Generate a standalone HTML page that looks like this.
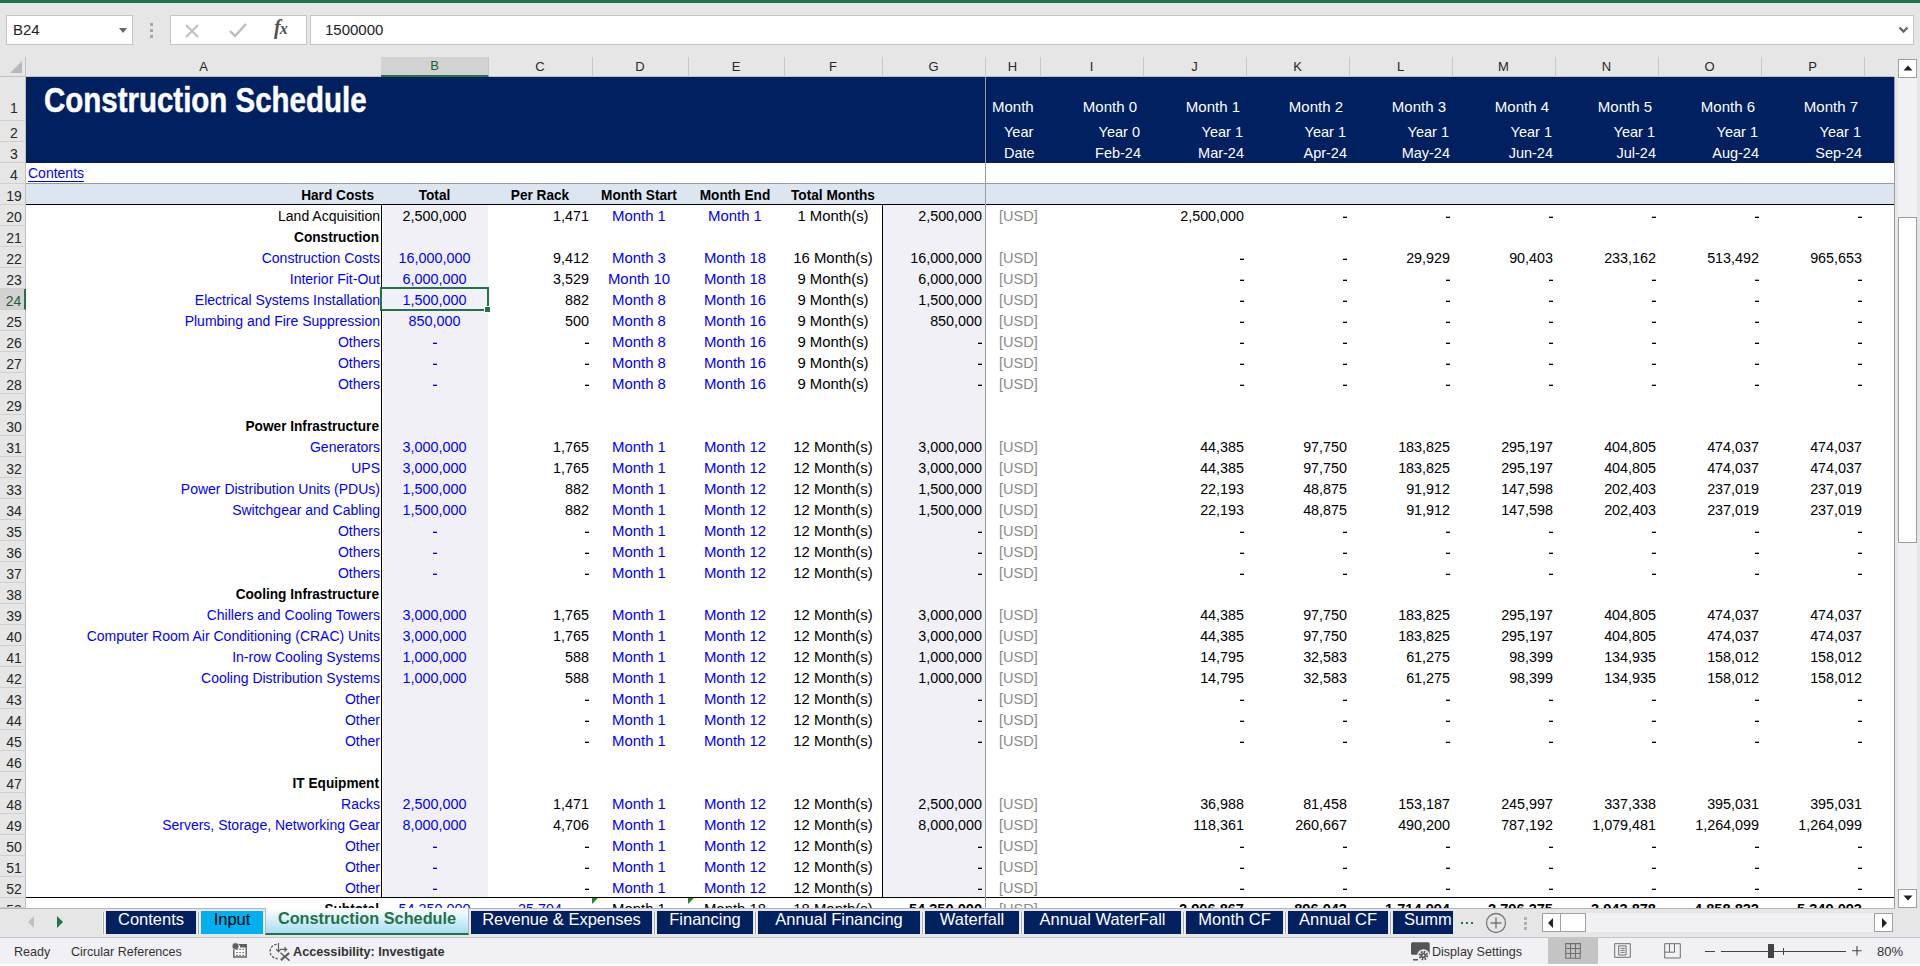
<!DOCTYPE html><html><head><meta charset="utf-8"><style>
*{margin:0;padding:0;box-sizing:border-box}
html,body{width:1920px;height:966px;overflow:hidden;background:#e6e6e6;font-family:"Liberation Sans",sans-serif;}
.a{position:absolute}
.t{position:absolute;height:21px;line-height:21px;font-size:14px;white-space:nowrap}
.ch{position:absolute;top:57px;height:20px;line-height:20px;font-size:13px;text-align:center;color:#262626;border-right:1px solid #c8c8c8}
.rh{position:absolute;left:0;width:26px;font-size:14px;color:#262626;text-align:center;border-bottom:1px solid #cfcfcf}
.tab{position:absolute;top:911px;height:23px;line-height:17px;font-size:16.5px;color:#fff;background:#002060;text-align:center;white-space:nowrap}
.sep{position:absolute;top:912px;width:3px;height:22px;background:linear-gradient(90deg,#f4f4f4 33%,#a8a8a8 33%,#a8a8a8 67%,#f4f4f4 67%)}
</style></head><body>
<div class="a" style="left:0;top:0;width:1920px;height:3px;background:#217346"></div>
<div class="a" style="left:6px;top:15px;width:127px;height:30px;background:#fff;border:1px solid #c6c6c6"></div>
<div class="a" style="left:13px;top:15px;height:30px;line-height:30px;font-size:15px;color:#222">B24</div>
<svg class="a" style="left:119px;top:28px" width="10" height="6"><path d="M0 0 L8 0 L4 5Z" fill="#666"/></svg>
<div class="a" style="left:150px;top:23px;width:3px;height:3px;background:#a6a6a6"></div>
<div class="a" style="left:150px;top:29px;width:3px;height:3px;background:#a6a6a6"></div>
<div class="a" style="left:150px;top:35px;width:3px;height:3px;background:#a6a6a6"></div>
<div class="a" style="left:170px;top:15px;width:137px;height:30px;background:#fff;border:1px solid #c6c6c6"></div>
<svg class="a" style="left:184px;top:23px" width="16" height="16"><path d="M2 2 L14 14 M14 2 L2 14" stroke="#bcbcbc" stroke-width="1.8"/></svg>
<svg class="a" style="left:228px;top:22px" width="20" height="16"><path d="M2 9 L7 14 L18 2" stroke="#bcbcbc" stroke-width="2.4" fill="none"/></svg>
<div class="a" style="left:274px;top:16px;font-family:'Liberation Serif',serif;font-style:italic;font-weight:bold;font-size:20px;color:#505050;letter-spacing:-1px">f<span style="font-size:16px">x</span></div>
<div class="a" style="left:310px;top:15px;width:1604px;height:30px;background:#fff;border:1px solid #c6c6c6"></div>
<div class="a" style="left:325px;top:15px;height:30px;line-height:30px;font-size:15px;color:#222">1500000</div>
<svg class="a" style="left:1898px;top:26px" width="12" height="8"><path d="M1.5 1.5 L5.5 5.5 L9.5 1.5" stroke="#6a6a6a" stroke-width="2.4" fill="none"/></svg>
<div class="a" style="left:0;top:57px;width:1894px;height:20px;background:#e6e6e6;border-bottom:1px solid #c0c0c0"></div>
<svg class="a" style="left:9px;top:60px" width="14" height="14"><path d="M13 1 L13 13 L1 13Z" fill="#b8b8b8"/></svg>
<div class="a" style="left:25px;top:57px;width:1px;height:20px;background:#c0c0c0"></div>
<div class="ch" style="left:26px;width:356px;">A</div>
<div class="ch" style="left:381px;width:108px;background:#d2d2d2;border-bottom:2px solid #217346;color:#1b5e32;line-height:18px;">B</div>
<div class="ch" style="left:488px;width:105px;">C</div>
<div class="ch" style="left:592px;width:97px;">D</div>
<div class="ch" style="left:688px;width:97px;">E</div>
<div class="ch" style="left:784px;width:99px;">F</div>
<div class="ch" style="left:882px;width:104px;">G</div>
<div class="ch" style="left:985px;width:56px;">H</div>
<div class="ch" style="left:1040px;width:104px;">I</div>
<div class="ch" style="left:1143px;width:104px;">J</div>
<div class="ch" style="left:1246px;width:104px;">K</div>
<div class="ch" style="left:1349px;width:104px;">L</div>
<div class="ch" style="left:1452px;width:104px;">M</div>
<div class="ch" style="left:1555px;width:104px;">N</div>
<div class="ch" style="left:1658px;width:104px;">O</div>
<div class="ch" style="left:1761px;width:104px;">P</div>
<div class="ch" style="left:1864px;width:30px;border-right:none"></div>
<div class="a" style="left:26px;top:77px;width:1868px;height:831px;background:#fff"></div>
<div class="rh" style="top:77px;height:44px;overflow:hidden;background:#e6e6e6;border-right:1px solid #c0c0c0;"><div style="position:absolute;left:3px;right:0;top:20.5px;height:21px;line-height:21px">1</div></div>
<div class="rh" style="top:121px;height:21px;overflow:hidden;background:#e6e6e6;border-right:1px solid #c0c0c0;"><div style="position:absolute;left:3px;right:0;top:1.5px;height:21px;line-height:21px">2</div></div>
<div class="rh" style="top:142px;height:21px;overflow:hidden;background:#e6e6e6;border-right:1px solid #c0c0c0;"><div style="position:absolute;left:3px;right:0;top:1.5px;height:21px;line-height:21px">3</div></div>
<div class="rh" style="top:163px;height:21px;overflow:hidden;background:#e6e6e6;border-right:1px solid #c0c0c0;"><div style="position:absolute;left:3px;right:0;top:1.5px;height:21px;line-height:21px">4</div></div>
<div class="rh" style="top:184px;height:21px;overflow:hidden;background:#e6e6e6;border-right:1px solid #c0c0c0;"><div style="position:absolute;left:3px;right:0;top:1.5px;height:21px;line-height:21px">19</div></div>
<div class="rh" style="top:205px;height:21px;overflow:hidden;background:#e6e6e6;border-right:1px solid #c0c0c0;"><div style="position:absolute;left:3px;right:0;top:1.5px;height:21px;line-height:21px">20</div></div>
<div class="rh" style="top:226px;height:21px;overflow:hidden;background:#e6e6e6;border-right:1px solid #c0c0c0;"><div style="position:absolute;left:3px;right:0;top:1.5px;height:21px;line-height:21px">21</div></div>
<div class="rh" style="top:247px;height:21px;overflow:hidden;background:#e6e6e6;border-right:1px solid #c0c0c0;"><div style="position:absolute;left:3px;right:0;top:1.5px;height:21px;line-height:21px">22</div></div>
<div class="rh" style="top:268px;height:21px;overflow:hidden;background:#e6e6e6;border-right:1px solid #c0c0c0;"><div style="position:absolute;left:3px;right:0;top:1.5px;height:21px;line-height:21px">23</div></div>
<div class="rh" style="top:289px;height:21px;overflow:hidden;background:#d2d2d2;color:#1b5e32;border-right:2px solid #217346;"><div style="position:absolute;left:3px;right:0;top:1.5px;height:21px;line-height:21px">24</div></div>
<div class="rh" style="top:310px;height:21px;overflow:hidden;background:#e6e6e6;border-right:1px solid #c0c0c0;"><div style="position:absolute;left:3px;right:0;top:1.5px;height:21px;line-height:21px">25</div></div>
<div class="rh" style="top:331px;height:21px;overflow:hidden;background:#e6e6e6;border-right:1px solid #c0c0c0;"><div style="position:absolute;left:3px;right:0;top:1.5px;height:21px;line-height:21px">26</div></div>
<div class="rh" style="top:352px;height:21px;overflow:hidden;background:#e6e6e6;border-right:1px solid #c0c0c0;"><div style="position:absolute;left:3px;right:0;top:1.5px;height:21px;line-height:21px">27</div></div>
<div class="rh" style="top:373px;height:21px;overflow:hidden;background:#e6e6e6;border-right:1px solid #c0c0c0;"><div style="position:absolute;left:3px;right:0;top:1.5px;height:21px;line-height:21px">28</div></div>
<div class="rh" style="top:394px;height:21px;overflow:hidden;background:#e6e6e6;border-right:1px solid #c0c0c0;"><div style="position:absolute;left:3px;right:0;top:1.5px;height:21px;line-height:21px">29</div></div>
<div class="rh" style="top:415px;height:21px;overflow:hidden;background:#e6e6e6;border-right:1px solid #c0c0c0;"><div style="position:absolute;left:3px;right:0;top:1.5px;height:21px;line-height:21px">30</div></div>
<div class="rh" style="top:436px;height:21px;overflow:hidden;background:#e6e6e6;border-right:1px solid #c0c0c0;"><div style="position:absolute;left:3px;right:0;top:1.5px;height:21px;line-height:21px">31</div></div>
<div class="rh" style="top:457px;height:21px;overflow:hidden;background:#e6e6e6;border-right:1px solid #c0c0c0;"><div style="position:absolute;left:3px;right:0;top:1.5px;height:21px;line-height:21px">32</div></div>
<div class="rh" style="top:478px;height:21px;overflow:hidden;background:#e6e6e6;border-right:1px solid #c0c0c0;"><div style="position:absolute;left:3px;right:0;top:1.5px;height:21px;line-height:21px">33</div></div>
<div class="rh" style="top:499px;height:21px;overflow:hidden;background:#e6e6e6;border-right:1px solid #c0c0c0;"><div style="position:absolute;left:3px;right:0;top:1.5px;height:21px;line-height:21px">34</div></div>
<div class="rh" style="top:520px;height:21px;overflow:hidden;background:#e6e6e6;border-right:1px solid #c0c0c0;"><div style="position:absolute;left:3px;right:0;top:1.5px;height:21px;line-height:21px">35</div></div>
<div class="rh" style="top:541px;height:21px;overflow:hidden;background:#e6e6e6;border-right:1px solid #c0c0c0;"><div style="position:absolute;left:3px;right:0;top:1.5px;height:21px;line-height:21px">36</div></div>
<div class="rh" style="top:562px;height:21px;overflow:hidden;background:#e6e6e6;border-right:1px solid #c0c0c0;"><div style="position:absolute;left:3px;right:0;top:1.5px;height:21px;line-height:21px">37</div></div>
<div class="rh" style="top:583px;height:21px;overflow:hidden;background:#e6e6e6;border-right:1px solid #c0c0c0;"><div style="position:absolute;left:3px;right:0;top:1.5px;height:21px;line-height:21px">38</div></div>
<div class="rh" style="top:604px;height:21px;overflow:hidden;background:#e6e6e6;border-right:1px solid #c0c0c0;"><div style="position:absolute;left:3px;right:0;top:1.5px;height:21px;line-height:21px">39</div></div>
<div class="rh" style="top:625px;height:21px;overflow:hidden;background:#e6e6e6;border-right:1px solid #c0c0c0;"><div style="position:absolute;left:3px;right:0;top:1.5px;height:21px;line-height:21px">40</div></div>
<div class="rh" style="top:646px;height:21px;overflow:hidden;background:#e6e6e6;border-right:1px solid #c0c0c0;"><div style="position:absolute;left:3px;right:0;top:1.5px;height:21px;line-height:21px">41</div></div>
<div class="rh" style="top:667px;height:21px;overflow:hidden;background:#e6e6e6;border-right:1px solid #c0c0c0;"><div style="position:absolute;left:3px;right:0;top:1.5px;height:21px;line-height:21px">42</div></div>
<div class="rh" style="top:688px;height:21px;overflow:hidden;background:#e6e6e6;border-right:1px solid #c0c0c0;"><div style="position:absolute;left:3px;right:0;top:1.5px;height:21px;line-height:21px">43</div></div>
<div class="rh" style="top:709px;height:21px;overflow:hidden;background:#e6e6e6;border-right:1px solid #c0c0c0;"><div style="position:absolute;left:3px;right:0;top:1.5px;height:21px;line-height:21px">44</div></div>
<div class="rh" style="top:730px;height:21px;overflow:hidden;background:#e6e6e6;border-right:1px solid #c0c0c0;"><div style="position:absolute;left:3px;right:0;top:1.5px;height:21px;line-height:21px">45</div></div>
<div class="rh" style="top:751px;height:21px;overflow:hidden;background:#e6e6e6;border-right:1px solid #c0c0c0;"><div style="position:absolute;left:3px;right:0;top:1.5px;height:21px;line-height:21px">46</div></div>
<div class="rh" style="top:772px;height:21px;overflow:hidden;background:#e6e6e6;border-right:1px solid #c0c0c0;"><div style="position:absolute;left:3px;right:0;top:1.5px;height:21px;line-height:21px">47</div></div>
<div class="rh" style="top:793px;height:21px;overflow:hidden;background:#e6e6e6;border-right:1px solid #c0c0c0;"><div style="position:absolute;left:3px;right:0;top:1.5px;height:21px;line-height:21px">48</div></div>
<div class="rh" style="top:814px;height:21px;overflow:hidden;background:#e6e6e6;border-right:1px solid #c0c0c0;"><div style="position:absolute;left:3px;right:0;top:1.5px;height:21px;line-height:21px">49</div></div>
<div class="rh" style="top:835px;height:21px;overflow:hidden;background:#e6e6e6;border-right:1px solid #c0c0c0;"><div style="position:absolute;left:3px;right:0;top:1.5px;height:21px;line-height:21px">50</div></div>
<div class="rh" style="top:856px;height:21px;overflow:hidden;background:#e6e6e6;border-right:1px solid #c0c0c0;"><div style="position:absolute;left:3px;right:0;top:1.5px;height:21px;line-height:21px">51</div></div>
<div class="rh" style="top:877px;height:21px;overflow:hidden;background:#e6e6e6;border-right:1px solid #c0c0c0;"><div style="position:absolute;left:3px;right:0;top:1.5px;height:21px;line-height:21px">52</div></div>
<div class="rh" style="top:898px;height:10px;overflow:hidden;background:#e6e6e6;border-right:1px solid #c0c0c0;"><div style="position:absolute;left:3px;right:0;top:1.5px;height:21px;line-height:21px">53</div></div>
<div class="a" style="left:26px;top:77px;width:1868px;height:86px;background:#002060"></div>
<div class="a" style="left:44px;top:78px;height:43px;line-height:43px;font-size:35px;font-weight:bold;color:#fff;transform:scaleX(0.842);transform-origin:0 0;white-space:nowrap;-webkit-text-stroke:0.5px #fff">Construction Schedule</div>
<div class="t" style="left:992px;top:96px;color:#fff;font-size:15px">Month</div>
<div class="t" style="left:1004px;top:122px;color:#fff;font-size:14.5px">Year</div>
<div class="t" style="left:1004px;top:143px;color:#fff;font-size:14.5px">Date</div>
<div class="t" style="left:1040px;width:97px;top:96px;text-align:right;color:#fff;font-size:15px">Month 0</div>
<div class="t" style="left:1040px;width:100px;top:122px;text-align:right;color:#fff;font-size:14.5px">Year 0</div>
<div class="t" style="left:1040px;width:101px;top:143px;text-align:right;color:#fff;font-size:14.5px">Feb-24</div>
<div class="t" style="left:1143px;width:97px;top:96px;text-align:right;color:#fff;font-size:15px">Month 1</div>
<div class="t" style="left:1143px;width:100px;top:122px;text-align:right;color:#fff;font-size:14.5px">Year 1</div>
<div class="t" style="left:1143px;width:101px;top:143px;text-align:right;color:#fff;font-size:14.5px">Mar-24</div>
<div class="t" style="left:1246px;width:97px;top:96px;text-align:right;color:#fff;font-size:15px">Month 2</div>
<div class="t" style="left:1246px;width:100px;top:122px;text-align:right;color:#fff;font-size:14.5px">Year 1</div>
<div class="t" style="left:1246px;width:101px;top:143px;text-align:right;color:#fff;font-size:14.5px">Apr-24</div>
<div class="t" style="left:1349px;width:97px;top:96px;text-align:right;color:#fff;font-size:15px">Month 3</div>
<div class="t" style="left:1349px;width:100px;top:122px;text-align:right;color:#fff;font-size:14.5px">Year 1</div>
<div class="t" style="left:1349px;width:101px;top:143px;text-align:right;color:#fff;font-size:14.5px">May-24</div>
<div class="t" style="left:1452px;width:97px;top:96px;text-align:right;color:#fff;font-size:15px">Month 4</div>
<div class="t" style="left:1452px;width:100px;top:122px;text-align:right;color:#fff;font-size:14.5px">Year 1</div>
<div class="t" style="left:1452px;width:101px;top:143px;text-align:right;color:#fff;font-size:14.5px">Jun-24</div>
<div class="t" style="left:1555px;width:97px;top:96px;text-align:right;color:#fff;font-size:15px">Month 5</div>
<div class="t" style="left:1555px;width:100px;top:122px;text-align:right;color:#fff;font-size:14.5px">Year 1</div>
<div class="t" style="left:1555px;width:101px;top:143px;text-align:right;color:#fff;font-size:14.5px">Jul-24</div>
<div class="t" style="left:1658px;width:97px;top:96px;text-align:right;color:#fff;font-size:15px">Month 6</div>
<div class="t" style="left:1658px;width:100px;top:122px;text-align:right;color:#fff;font-size:14.5px">Year 1</div>
<div class="t" style="left:1658px;width:101px;top:143px;text-align:right;color:#fff;font-size:14.5px">Aug-24</div>
<div class="t" style="left:1761px;width:97px;top:96px;text-align:right;color:#fff;font-size:15px">Month 7</div>
<div class="t" style="left:1761px;width:100px;top:122px;text-align:right;color:#fff;font-size:14.5px">Year 1</div>
<div class="t" style="left:1761px;width:101px;top:143px;text-align:right;color:#fff;font-size:14.5px">Sep-24</div>
<div class="t" style="left:28px;top:163px;color:#0000ff;text-decoration:underline;text-underline-offset:3px">Contents</div>
<div class="a" style="left:26px;top:183px;width:1868px;height:21px;background:#dce6f1"></div>
<div class="a" style="left:26px;top:204px;width:1868px;height:1px;background:#000"></div>
<div class="t" style="left:26px;width:348px;top:185px;text-align:right;color:#000000;font-weight:bold;font-size:15px;transform:translateY(-1px) scaleX(0.91);transform-origin:100% 0;">Hard Costs</div>
<div class="t" style="left:381px;width:107px;top:185px;text-align:center;color:#000000;font-weight:bold;font-size:15px;transform:translateY(-1px) scaleX(0.91);transform-origin:50% 0;">Total</div>
<div class="t" style="left:488px;width:104px;top:185px;text-align:center;color:#000000;font-weight:bold;font-size:15px;transform:translateY(-1px) scaleX(0.91);transform-origin:50% 0;">Per Rack</div>
<div class="t" style="left:591px;width:96px;top:185px;text-align:center;color:#000000;font-weight:bold;font-size:15px;transform:translateY(-1px) scaleX(0.91);transform-origin:50% 0;">Month Start</div>
<div class="t" style="left:687px;width:96px;top:185px;text-align:center;color:#000000;font-weight:bold;font-size:15px;transform:translateY(-1px) scaleX(0.91);transform-origin:50% 0;">Month End</div>
<div class="t" style="left:784px;width:98px;top:185px;text-align:center;color:#000000;font-weight:bold;font-size:15px;transform:translateY(-1px) scaleX(0.91);transform-origin:50% 0;">Total Months</div>
<div class="a" style="left:383px;top:205px;width:105px;height:692px;background:#f0f0f6"></div>
<div class="a" style="left:883px;top:205px;width:102px;height:692px;background:#f0f0f6"></div>
<div class="a" style="left:381px;top:204px;width:1px;height:693px;background:#000"></div>
<div class="a" style="left:882px;top:204px;width:1px;height:693px;background:#000"></div>
<div class="t" style="left:26px;width:354px;top:206px;text-align:right;color:#000000;font-size:14px;">Land Acquisition</div>
<div class="t" style="left:381px;width:107px;top:206px;text-align:center;color:#000000;font-size:14.35px;">2,500,000</div>
<div class="t" style="left:488px;width:101px;top:206px;text-align:right;color:#000000;font-size:14.35px;">1,471</div>
<div class="t" style="left:591px;width:96px;top:206px;text-align:center;color:#0000ff;font-size:14.9px;">Month 1</div>
<div class="t" style="left:687px;width:96px;top:206px;text-align:center;color:#0000ff;font-size:14.9px;">Month 1</div>
<div class="t" style="left:784px;width:98px;top:206px;text-align:center;color:#000000;font-size:14.9px;">1 Month(s)</div>
<div class="t" style="left:882px;width:100px;top:206px;text-align:right;color:#000000;font-size:14.35px;">2,500,000</div>
<div class="t" style="left:999px;top:206px;color:#8a8a8a;font-size:14.5px">[USD]</div>
<div class="t" style="left:1143px;width:101px;top:206px;text-align:right;color:#000000;font-size:14.35px;">2,500,000</div>
<div class="a" style="left:1342.5px;top:216px;width:4px;height:2px;background:linear-gradient(#00000055 50%,#000000 50%)"></div>
<div class="a" style="left:1445.5px;top:216px;width:4px;height:2px;background:linear-gradient(#00000055 50%,#000000 50%)"></div>
<div class="a" style="left:1548.5px;top:216px;width:4px;height:2px;background:linear-gradient(#00000055 50%,#000000 50%)"></div>
<div class="a" style="left:1651.5px;top:216px;width:4px;height:2px;background:linear-gradient(#00000055 50%,#000000 50%)"></div>
<div class="a" style="left:1754.5px;top:216px;width:4px;height:2px;background:linear-gradient(#00000055 50%,#000000 50%)"></div>
<div class="a" style="left:1857.5px;top:216px;width:4px;height:2px;background:linear-gradient(#00000055 50%,#000000 50%)"></div>
<div class="t" style="left:26px;width:353px;top:227px;text-align:right;color:#000000;font-weight:bold;font-size:15px;transform:translateY(-1px) scaleX(0.91);transform-origin:100% 0;">Construction</div>
<div class="t" style="left:26px;width:354px;top:248px;text-align:right;color:#0000ff;font-size:14px;">Construction Costs</div>
<div class="t" style="left:381px;width:107px;top:248px;text-align:center;color:#0000ff;font-size:14.35px;">16,000,000</div>
<div class="t" style="left:488px;width:101px;top:248px;text-align:right;color:#000000;font-size:14.35px;">9,412</div>
<div class="t" style="left:591px;width:96px;top:248px;text-align:center;color:#0000ff;font-size:14.9px;">Month 3</div>
<div class="t" style="left:687px;width:96px;top:248px;text-align:center;color:#0000ff;font-size:14.9px;">Month 18</div>
<div class="t" style="left:784px;width:98px;top:248px;text-align:center;color:#000000;font-size:14.9px;">16 Month(s)</div>
<div class="t" style="left:882px;width:100px;top:248px;text-align:right;color:#000000;font-size:14.35px;">16,000,000</div>
<div class="t" style="left:999px;top:248px;color:#8a8a8a;font-size:14.5px">[USD]</div>
<div class="a" style="left:1239.5px;top:258px;width:4px;height:2px;background:linear-gradient(#00000055 50%,#000000 50%)"></div>
<div class="a" style="left:1342.5px;top:258px;width:4px;height:2px;background:linear-gradient(#00000055 50%,#000000 50%)"></div>
<div class="t" style="left:1349px;width:101px;top:248px;text-align:right;color:#000000;font-size:14.35px;">29,929</div>
<div class="t" style="left:1452px;width:101px;top:248px;text-align:right;color:#000000;font-size:14.35px;">90,403</div>
<div class="t" style="left:1555px;width:101px;top:248px;text-align:right;color:#000000;font-size:14.35px;">233,162</div>
<div class="t" style="left:1658px;width:101px;top:248px;text-align:right;color:#000000;font-size:14.35px;">513,492</div>
<div class="t" style="left:1761px;width:101px;top:248px;text-align:right;color:#000000;font-size:14.35px;">965,653</div>
<div class="t" style="left:26px;width:354px;top:269px;text-align:right;color:#0000ff;font-size:14px;">Interior Fit-Out</div>
<div class="t" style="left:381px;width:107px;top:269px;text-align:center;color:#0000ff;font-size:14.35px;">6,000,000</div>
<div class="t" style="left:488px;width:101px;top:269px;text-align:right;color:#000000;font-size:14.35px;">3,529</div>
<div class="t" style="left:591px;width:96px;top:269px;text-align:center;color:#0000ff;font-size:14.9px;">Month 10</div>
<div class="t" style="left:687px;width:96px;top:269px;text-align:center;color:#0000ff;font-size:14.9px;">Month 18</div>
<div class="t" style="left:784px;width:98px;top:269px;text-align:center;color:#000000;font-size:14.9px;">9 Month(s)</div>
<div class="t" style="left:882px;width:100px;top:269px;text-align:right;color:#000000;font-size:14.35px;">6,000,000</div>
<div class="t" style="left:999px;top:269px;color:#8a8a8a;font-size:14.5px">[USD]</div>
<div class="a" style="left:1239.5px;top:279px;width:4px;height:2px;background:linear-gradient(#00000055 50%,#000000 50%)"></div>
<div class="a" style="left:1342.5px;top:279px;width:4px;height:2px;background:linear-gradient(#00000055 50%,#000000 50%)"></div>
<div class="a" style="left:1445.5px;top:279px;width:4px;height:2px;background:linear-gradient(#00000055 50%,#000000 50%)"></div>
<div class="a" style="left:1548.5px;top:279px;width:4px;height:2px;background:linear-gradient(#00000055 50%,#000000 50%)"></div>
<div class="a" style="left:1651.5px;top:279px;width:4px;height:2px;background:linear-gradient(#00000055 50%,#000000 50%)"></div>
<div class="a" style="left:1754.5px;top:279px;width:4px;height:2px;background:linear-gradient(#00000055 50%,#000000 50%)"></div>
<div class="a" style="left:1857.5px;top:279px;width:4px;height:2px;background:linear-gradient(#00000055 50%,#000000 50%)"></div>
<div class="t" style="left:26px;width:354px;top:290px;text-align:right;color:#0000ff;font-size:14px;">Electrical Systems Installation</div>
<div class="t" style="left:381px;width:107px;top:290px;text-align:center;color:#0000ff;font-size:14.35px;">1,500,000</div>
<div class="t" style="left:488px;width:101px;top:290px;text-align:right;color:#000000;font-size:14.35px;">882</div>
<div class="t" style="left:591px;width:96px;top:290px;text-align:center;color:#0000ff;font-size:14.9px;">Month 8</div>
<div class="t" style="left:687px;width:96px;top:290px;text-align:center;color:#0000ff;font-size:14.9px;">Month 16</div>
<div class="t" style="left:784px;width:98px;top:290px;text-align:center;color:#000000;font-size:14.9px;">9 Month(s)</div>
<div class="t" style="left:882px;width:100px;top:290px;text-align:right;color:#000000;font-size:14.35px;">1,500,000</div>
<div class="t" style="left:999px;top:290px;color:#8a8a8a;font-size:14.5px">[USD]</div>
<div class="a" style="left:1239.5px;top:300px;width:4px;height:2px;background:linear-gradient(#00000055 50%,#000000 50%)"></div>
<div class="a" style="left:1342.5px;top:300px;width:4px;height:2px;background:linear-gradient(#00000055 50%,#000000 50%)"></div>
<div class="a" style="left:1445.5px;top:300px;width:4px;height:2px;background:linear-gradient(#00000055 50%,#000000 50%)"></div>
<div class="a" style="left:1548.5px;top:300px;width:4px;height:2px;background:linear-gradient(#00000055 50%,#000000 50%)"></div>
<div class="a" style="left:1651.5px;top:300px;width:4px;height:2px;background:linear-gradient(#00000055 50%,#000000 50%)"></div>
<div class="a" style="left:1754.5px;top:300px;width:4px;height:2px;background:linear-gradient(#00000055 50%,#000000 50%)"></div>
<div class="a" style="left:1857.5px;top:300px;width:4px;height:2px;background:linear-gradient(#00000055 50%,#000000 50%)"></div>
<div class="t" style="left:26px;width:354px;top:311px;text-align:right;color:#0000ff;font-size:14px;">Plumbing and Fire Suppression</div>
<div class="t" style="left:381px;width:107px;top:311px;text-align:center;color:#0000ff;font-size:14.35px;">850,000</div>
<div class="t" style="left:488px;width:101px;top:311px;text-align:right;color:#000000;font-size:14.35px;">500</div>
<div class="t" style="left:591px;width:96px;top:311px;text-align:center;color:#0000ff;font-size:14.9px;">Month 8</div>
<div class="t" style="left:687px;width:96px;top:311px;text-align:center;color:#0000ff;font-size:14.9px;">Month 16</div>
<div class="t" style="left:784px;width:98px;top:311px;text-align:center;color:#000000;font-size:14.9px;">9 Month(s)</div>
<div class="t" style="left:882px;width:100px;top:311px;text-align:right;color:#000000;font-size:14.35px;">850,000</div>
<div class="t" style="left:999px;top:311px;color:#8a8a8a;font-size:14.5px">[USD]</div>
<div class="a" style="left:1239.5px;top:321px;width:4px;height:2px;background:linear-gradient(#00000055 50%,#000000 50%)"></div>
<div class="a" style="left:1342.5px;top:321px;width:4px;height:2px;background:linear-gradient(#00000055 50%,#000000 50%)"></div>
<div class="a" style="left:1445.5px;top:321px;width:4px;height:2px;background:linear-gradient(#00000055 50%,#000000 50%)"></div>
<div class="a" style="left:1548.5px;top:321px;width:4px;height:2px;background:linear-gradient(#00000055 50%,#000000 50%)"></div>
<div class="a" style="left:1651.5px;top:321px;width:4px;height:2px;background:linear-gradient(#00000055 50%,#000000 50%)"></div>
<div class="a" style="left:1754.5px;top:321px;width:4px;height:2px;background:linear-gradient(#00000055 50%,#000000 50%)"></div>
<div class="a" style="left:1857.5px;top:321px;width:4px;height:2px;background:linear-gradient(#00000055 50%,#000000 50%)"></div>
<div class="t" style="left:26px;width:354px;top:332px;text-align:right;color:#0000ff;font-size:14px;">Others</div>
<div class="a" style="left:432.5px;top:342px;width:4px;height:2px;background:linear-gradient(#0000ff55 50%,#0000ff 50%)"></div>
<div class="a" style="left:584.5px;top:342px;width:4px;height:2px;background:linear-gradient(#00000055 50%,#000000 50%)"></div>
<div class="t" style="left:591px;width:96px;top:332px;text-align:center;color:#0000ff;font-size:14.9px;">Month 8</div>
<div class="t" style="left:687px;width:96px;top:332px;text-align:center;color:#0000ff;font-size:14.9px;">Month 16</div>
<div class="t" style="left:784px;width:98px;top:332px;text-align:center;color:#000000;font-size:14.9px;">9 Month(s)</div>
<div class="a" style="left:977.5px;top:342px;width:4px;height:2px;background:linear-gradient(#00000055 50%,#000000 50%)"></div>
<div class="t" style="left:999px;top:332px;color:#8a8a8a;font-size:14.5px">[USD]</div>
<div class="a" style="left:1239.5px;top:342px;width:4px;height:2px;background:linear-gradient(#00000055 50%,#000000 50%)"></div>
<div class="a" style="left:1342.5px;top:342px;width:4px;height:2px;background:linear-gradient(#00000055 50%,#000000 50%)"></div>
<div class="a" style="left:1445.5px;top:342px;width:4px;height:2px;background:linear-gradient(#00000055 50%,#000000 50%)"></div>
<div class="a" style="left:1548.5px;top:342px;width:4px;height:2px;background:linear-gradient(#00000055 50%,#000000 50%)"></div>
<div class="a" style="left:1651.5px;top:342px;width:4px;height:2px;background:linear-gradient(#00000055 50%,#000000 50%)"></div>
<div class="a" style="left:1754.5px;top:342px;width:4px;height:2px;background:linear-gradient(#00000055 50%,#000000 50%)"></div>
<div class="a" style="left:1857.5px;top:342px;width:4px;height:2px;background:linear-gradient(#00000055 50%,#000000 50%)"></div>
<div class="t" style="left:26px;width:354px;top:353px;text-align:right;color:#0000ff;font-size:14px;">Others</div>
<div class="a" style="left:432.5px;top:363px;width:4px;height:2px;background:linear-gradient(#0000ff55 50%,#0000ff 50%)"></div>
<div class="a" style="left:584.5px;top:363px;width:4px;height:2px;background:linear-gradient(#00000055 50%,#000000 50%)"></div>
<div class="t" style="left:591px;width:96px;top:353px;text-align:center;color:#0000ff;font-size:14.9px;">Month 8</div>
<div class="t" style="left:687px;width:96px;top:353px;text-align:center;color:#0000ff;font-size:14.9px;">Month 16</div>
<div class="t" style="left:784px;width:98px;top:353px;text-align:center;color:#000000;font-size:14.9px;">9 Month(s)</div>
<div class="a" style="left:977.5px;top:363px;width:4px;height:2px;background:linear-gradient(#00000055 50%,#000000 50%)"></div>
<div class="t" style="left:999px;top:353px;color:#8a8a8a;font-size:14.5px">[USD]</div>
<div class="a" style="left:1239.5px;top:363px;width:4px;height:2px;background:linear-gradient(#00000055 50%,#000000 50%)"></div>
<div class="a" style="left:1342.5px;top:363px;width:4px;height:2px;background:linear-gradient(#00000055 50%,#000000 50%)"></div>
<div class="a" style="left:1445.5px;top:363px;width:4px;height:2px;background:linear-gradient(#00000055 50%,#000000 50%)"></div>
<div class="a" style="left:1548.5px;top:363px;width:4px;height:2px;background:linear-gradient(#00000055 50%,#000000 50%)"></div>
<div class="a" style="left:1651.5px;top:363px;width:4px;height:2px;background:linear-gradient(#00000055 50%,#000000 50%)"></div>
<div class="a" style="left:1754.5px;top:363px;width:4px;height:2px;background:linear-gradient(#00000055 50%,#000000 50%)"></div>
<div class="a" style="left:1857.5px;top:363px;width:4px;height:2px;background:linear-gradient(#00000055 50%,#000000 50%)"></div>
<div class="t" style="left:26px;width:354px;top:374px;text-align:right;color:#0000ff;font-size:14px;">Others</div>
<div class="a" style="left:432.5px;top:384px;width:4px;height:2px;background:linear-gradient(#0000ff55 50%,#0000ff 50%)"></div>
<div class="a" style="left:584.5px;top:384px;width:4px;height:2px;background:linear-gradient(#00000055 50%,#000000 50%)"></div>
<div class="t" style="left:591px;width:96px;top:374px;text-align:center;color:#0000ff;font-size:14.9px;">Month 8</div>
<div class="t" style="left:687px;width:96px;top:374px;text-align:center;color:#0000ff;font-size:14.9px;">Month 16</div>
<div class="t" style="left:784px;width:98px;top:374px;text-align:center;color:#000000;font-size:14.9px;">9 Month(s)</div>
<div class="a" style="left:977.5px;top:384px;width:4px;height:2px;background:linear-gradient(#00000055 50%,#000000 50%)"></div>
<div class="t" style="left:999px;top:374px;color:#8a8a8a;font-size:14.5px">[USD]</div>
<div class="a" style="left:1239.5px;top:384px;width:4px;height:2px;background:linear-gradient(#00000055 50%,#000000 50%)"></div>
<div class="a" style="left:1342.5px;top:384px;width:4px;height:2px;background:linear-gradient(#00000055 50%,#000000 50%)"></div>
<div class="a" style="left:1445.5px;top:384px;width:4px;height:2px;background:linear-gradient(#00000055 50%,#000000 50%)"></div>
<div class="a" style="left:1548.5px;top:384px;width:4px;height:2px;background:linear-gradient(#00000055 50%,#000000 50%)"></div>
<div class="a" style="left:1651.5px;top:384px;width:4px;height:2px;background:linear-gradient(#00000055 50%,#000000 50%)"></div>
<div class="a" style="left:1754.5px;top:384px;width:4px;height:2px;background:linear-gradient(#00000055 50%,#000000 50%)"></div>
<div class="a" style="left:1857.5px;top:384px;width:4px;height:2px;background:linear-gradient(#00000055 50%,#000000 50%)"></div>
<div class="t" style="left:26px;width:353px;top:416px;text-align:right;color:#000000;font-weight:bold;font-size:15px;transform:translateY(-1px) scaleX(0.91);transform-origin:100% 0;">Power Infrastructure</div>
<div class="t" style="left:26px;width:354px;top:437px;text-align:right;color:#0000ff;font-size:14px;">Generators</div>
<div class="t" style="left:381px;width:107px;top:437px;text-align:center;color:#0000ff;font-size:14.35px;">3,000,000</div>
<div class="t" style="left:488px;width:101px;top:437px;text-align:right;color:#000000;font-size:14.35px;">1,765</div>
<div class="t" style="left:591px;width:96px;top:437px;text-align:center;color:#0000ff;font-size:14.9px;">Month 1</div>
<div class="t" style="left:687px;width:96px;top:437px;text-align:center;color:#0000ff;font-size:14.9px;">Month 12</div>
<div class="t" style="left:784px;width:98px;top:437px;text-align:center;color:#000000;font-size:14.9px;">12 Month(s)</div>
<div class="t" style="left:882px;width:100px;top:437px;text-align:right;color:#000000;font-size:14.35px;">3,000,000</div>
<div class="t" style="left:999px;top:437px;color:#8a8a8a;font-size:14.5px">[USD]</div>
<div class="t" style="left:1143px;width:101px;top:437px;text-align:right;color:#000000;font-size:14.35px;">44,385</div>
<div class="t" style="left:1246px;width:101px;top:437px;text-align:right;color:#000000;font-size:14.35px;">97,750</div>
<div class="t" style="left:1349px;width:101px;top:437px;text-align:right;color:#000000;font-size:14.35px;">183,825</div>
<div class="t" style="left:1452px;width:101px;top:437px;text-align:right;color:#000000;font-size:14.35px;">295,197</div>
<div class="t" style="left:1555px;width:101px;top:437px;text-align:right;color:#000000;font-size:14.35px;">404,805</div>
<div class="t" style="left:1658px;width:101px;top:437px;text-align:right;color:#000000;font-size:14.35px;">474,037</div>
<div class="t" style="left:1761px;width:101px;top:437px;text-align:right;color:#000000;font-size:14.35px;">474,037</div>
<div class="t" style="left:26px;width:354px;top:458px;text-align:right;color:#0000ff;font-size:14px;">UPS</div>
<div class="t" style="left:381px;width:107px;top:458px;text-align:center;color:#0000ff;font-size:14.35px;">3,000,000</div>
<div class="t" style="left:488px;width:101px;top:458px;text-align:right;color:#000000;font-size:14.35px;">1,765</div>
<div class="t" style="left:591px;width:96px;top:458px;text-align:center;color:#0000ff;font-size:14.9px;">Month 1</div>
<div class="t" style="left:687px;width:96px;top:458px;text-align:center;color:#0000ff;font-size:14.9px;">Month 12</div>
<div class="t" style="left:784px;width:98px;top:458px;text-align:center;color:#000000;font-size:14.9px;">12 Month(s)</div>
<div class="t" style="left:882px;width:100px;top:458px;text-align:right;color:#000000;font-size:14.35px;">3,000,000</div>
<div class="t" style="left:999px;top:458px;color:#8a8a8a;font-size:14.5px">[USD]</div>
<div class="t" style="left:1143px;width:101px;top:458px;text-align:right;color:#000000;font-size:14.35px;">44,385</div>
<div class="t" style="left:1246px;width:101px;top:458px;text-align:right;color:#000000;font-size:14.35px;">97,750</div>
<div class="t" style="left:1349px;width:101px;top:458px;text-align:right;color:#000000;font-size:14.35px;">183,825</div>
<div class="t" style="left:1452px;width:101px;top:458px;text-align:right;color:#000000;font-size:14.35px;">295,197</div>
<div class="t" style="left:1555px;width:101px;top:458px;text-align:right;color:#000000;font-size:14.35px;">404,805</div>
<div class="t" style="left:1658px;width:101px;top:458px;text-align:right;color:#000000;font-size:14.35px;">474,037</div>
<div class="t" style="left:1761px;width:101px;top:458px;text-align:right;color:#000000;font-size:14.35px;">474,037</div>
<div class="t" style="left:26px;width:354px;top:479px;text-align:right;color:#0000ff;font-size:14px;">Power Distribution Units (PDUs)</div>
<div class="t" style="left:381px;width:107px;top:479px;text-align:center;color:#0000ff;font-size:14.35px;">1,500,000</div>
<div class="t" style="left:488px;width:101px;top:479px;text-align:right;color:#000000;font-size:14.35px;">882</div>
<div class="t" style="left:591px;width:96px;top:479px;text-align:center;color:#0000ff;font-size:14.9px;">Month 1</div>
<div class="t" style="left:687px;width:96px;top:479px;text-align:center;color:#0000ff;font-size:14.9px;">Month 12</div>
<div class="t" style="left:784px;width:98px;top:479px;text-align:center;color:#000000;font-size:14.9px;">12 Month(s)</div>
<div class="t" style="left:882px;width:100px;top:479px;text-align:right;color:#000000;font-size:14.35px;">1,500,000</div>
<div class="t" style="left:999px;top:479px;color:#8a8a8a;font-size:14.5px">[USD]</div>
<div class="t" style="left:1143px;width:101px;top:479px;text-align:right;color:#000000;font-size:14.35px;">22,193</div>
<div class="t" style="left:1246px;width:101px;top:479px;text-align:right;color:#000000;font-size:14.35px;">48,875</div>
<div class="t" style="left:1349px;width:101px;top:479px;text-align:right;color:#000000;font-size:14.35px;">91,912</div>
<div class="t" style="left:1452px;width:101px;top:479px;text-align:right;color:#000000;font-size:14.35px;">147,598</div>
<div class="t" style="left:1555px;width:101px;top:479px;text-align:right;color:#000000;font-size:14.35px;">202,403</div>
<div class="t" style="left:1658px;width:101px;top:479px;text-align:right;color:#000000;font-size:14.35px;">237,019</div>
<div class="t" style="left:1761px;width:101px;top:479px;text-align:right;color:#000000;font-size:14.35px;">237,019</div>
<div class="t" style="left:26px;width:354px;top:500px;text-align:right;color:#0000ff;font-size:14px;">Switchgear and Cabling</div>
<div class="t" style="left:381px;width:107px;top:500px;text-align:center;color:#0000ff;font-size:14.35px;">1,500,000</div>
<div class="t" style="left:488px;width:101px;top:500px;text-align:right;color:#000000;font-size:14.35px;">882</div>
<div class="t" style="left:591px;width:96px;top:500px;text-align:center;color:#0000ff;font-size:14.9px;">Month 1</div>
<div class="t" style="left:687px;width:96px;top:500px;text-align:center;color:#0000ff;font-size:14.9px;">Month 12</div>
<div class="t" style="left:784px;width:98px;top:500px;text-align:center;color:#000000;font-size:14.9px;">12 Month(s)</div>
<div class="t" style="left:882px;width:100px;top:500px;text-align:right;color:#000000;font-size:14.35px;">1,500,000</div>
<div class="t" style="left:999px;top:500px;color:#8a8a8a;font-size:14.5px">[USD]</div>
<div class="t" style="left:1143px;width:101px;top:500px;text-align:right;color:#000000;font-size:14.35px;">22,193</div>
<div class="t" style="left:1246px;width:101px;top:500px;text-align:right;color:#000000;font-size:14.35px;">48,875</div>
<div class="t" style="left:1349px;width:101px;top:500px;text-align:right;color:#000000;font-size:14.35px;">91,912</div>
<div class="t" style="left:1452px;width:101px;top:500px;text-align:right;color:#000000;font-size:14.35px;">147,598</div>
<div class="t" style="left:1555px;width:101px;top:500px;text-align:right;color:#000000;font-size:14.35px;">202,403</div>
<div class="t" style="left:1658px;width:101px;top:500px;text-align:right;color:#000000;font-size:14.35px;">237,019</div>
<div class="t" style="left:1761px;width:101px;top:500px;text-align:right;color:#000000;font-size:14.35px;">237,019</div>
<div class="t" style="left:26px;width:354px;top:521px;text-align:right;color:#0000ff;font-size:14px;">Others</div>
<div class="a" style="left:432.5px;top:531px;width:4px;height:2px;background:linear-gradient(#0000ff55 50%,#0000ff 50%)"></div>
<div class="a" style="left:584.5px;top:531px;width:4px;height:2px;background:linear-gradient(#00000055 50%,#000000 50%)"></div>
<div class="t" style="left:591px;width:96px;top:521px;text-align:center;color:#0000ff;font-size:14.9px;">Month 1</div>
<div class="t" style="left:687px;width:96px;top:521px;text-align:center;color:#0000ff;font-size:14.9px;">Month 12</div>
<div class="t" style="left:784px;width:98px;top:521px;text-align:center;color:#000000;font-size:14.9px;">12 Month(s)</div>
<div class="a" style="left:977.5px;top:531px;width:4px;height:2px;background:linear-gradient(#00000055 50%,#000000 50%)"></div>
<div class="t" style="left:999px;top:521px;color:#8a8a8a;font-size:14.5px">[USD]</div>
<div class="a" style="left:1239.5px;top:531px;width:4px;height:2px;background:linear-gradient(#00000055 50%,#000000 50%)"></div>
<div class="a" style="left:1342.5px;top:531px;width:4px;height:2px;background:linear-gradient(#00000055 50%,#000000 50%)"></div>
<div class="a" style="left:1445.5px;top:531px;width:4px;height:2px;background:linear-gradient(#00000055 50%,#000000 50%)"></div>
<div class="a" style="left:1548.5px;top:531px;width:4px;height:2px;background:linear-gradient(#00000055 50%,#000000 50%)"></div>
<div class="a" style="left:1651.5px;top:531px;width:4px;height:2px;background:linear-gradient(#00000055 50%,#000000 50%)"></div>
<div class="a" style="left:1754.5px;top:531px;width:4px;height:2px;background:linear-gradient(#00000055 50%,#000000 50%)"></div>
<div class="a" style="left:1857.5px;top:531px;width:4px;height:2px;background:linear-gradient(#00000055 50%,#000000 50%)"></div>
<div class="t" style="left:26px;width:354px;top:542px;text-align:right;color:#0000ff;font-size:14px;">Others</div>
<div class="a" style="left:432.5px;top:552px;width:4px;height:2px;background:linear-gradient(#0000ff55 50%,#0000ff 50%)"></div>
<div class="a" style="left:584.5px;top:552px;width:4px;height:2px;background:linear-gradient(#00000055 50%,#000000 50%)"></div>
<div class="t" style="left:591px;width:96px;top:542px;text-align:center;color:#0000ff;font-size:14.9px;">Month 1</div>
<div class="t" style="left:687px;width:96px;top:542px;text-align:center;color:#0000ff;font-size:14.9px;">Month 12</div>
<div class="t" style="left:784px;width:98px;top:542px;text-align:center;color:#000000;font-size:14.9px;">12 Month(s)</div>
<div class="a" style="left:977.5px;top:552px;width:4px;height:2px;background:linear-gradient(#00000055 50%,#000000 50%)"></div>
<div class="t" style="left:999px;top:542px;color:#8a8a8a;font-size:14.5px">[USD]</div>
<div class="a" style="left:1239.5px;top:552px;width:4px;height:2px;background:linear-gradient(#00000055 50%,#000000 50%)"></div>
<div class="a" style="left:1342.5px;top:552px;width:4px;height:2px;background:linear-gradient(#00000055 50%,#000000 50%)"></div>
<div class="a" style="left:1445.5px;top:552px;width:4px;height:2px;background:linear-gradient(#00000055 50%,#000000 50%)"></div>
<div class="a" style="left:1548.5px;top:552px;width:4px;height:2px;background:linear-gradient(#00000055 50%,#000000 50%)"></div>
<div class="a" style="left:1651.5px;top:552px;width:4px;height:2px;background:linear-gradient(#00000055 50%,#000000 50%)"></div>
<div class="a" style="left:1754.5px;top:552px;width:4px;height:2px;background:linear-gradient(#00000055 50%,#000000 50%)"></div>
<div class="a" style="left:1857.5px;top:552px;width:4px;height:2px;background:linear-gradient(#00000055 50%,#000000 50%)"></div>
<div class="t" style="left:26px;width:354px;top:563px;text-align:right;color:#0000ff;font-size:14px;">Others</div>
<div class="a" style="left:432.5px;top:573px;width:4px;height:2px;background:linear-gradient(#0000ff55 50%,#0000ff 50%)"></div>
<div class="a" style="left:584.5px;top:573px;width:4px;height:2px;background:linear-gradient(#00000055 50%,#000000 50%)"></div>
<div class="t" style="left:591px;width:96px;top:563px;text-align:center;color:#0000ff;font-size:14.9px;">Month 1</div>
<div class="t" style="left:687px;width:96px;top:563px;text-align:center;color:#0000ff;font-size:14.9px;">Month 12</div>
<div class="t" style="left:784px;width:98px;top:563px;text-align:center;color:#000000;font-size:14.9px;">12 Month(s)</div>
<div class="a" style="left:977.5px;top:573px;width:4px;height:2px;background:linear-gradient(#00000055 50%,#000000 50%)"></div>
<div class="t" style="left:999px;top:563px;color:#8a8a8a;font-size:14.5px">[USD]</div>
<div class="a" style="left:1239.5px;top:573px;width:4px;height:2px;background:linear-gradient(#00000055 50%,#000000 50%)"></div>
<div class="a" style="left:1342.5px;top:573px;width:4px;height:2px;background:linear-gradient(#00000055 50%,#000000 50%)"></div>
<div class="a" style="left:1445.5px;top:573px;width:4px;height:2px;background:linear-gradient(#00000055 50%,#000000 50%)"></div>
<div class="a" style="left:1548.5px;top:573px;width:4px;height:2px;background:linear-gradient(#00000055 50%,#000000 50%)"></div>
<div class="a" style="left:1651.5px;top:573px;width:4px;height:2px;background:linear-gradient(#00000055 50%,#000000 50%)"></div>
<div class="a" style="left:1754.5px;top:573px;width:4px;height:2px;background:linear-gradient(#00000055 50%,#000000 50%)"></div>
<div class="a" style="left:1857.5px;top:573px;width:4px;height:2px;background:linear-gradient(#00000055 50%,#000000 50%)"></div>
<div class="t" style="left:26px;width:353px;top:584px;text-align:right;color:#000000;font-weight:bold;font-size:15px;transform:translateY(-1px) scaleX(0.91);transform-origin:100% 0;">Cooling Infrastructure</div>
<div class="t" style="left:26px;width:354px;top:605px;text-align:right;color:#0000ff;font-size:14px;">Chillers and Cooling Towers</div>
<div class="t" style="left:381px;width:107px;top:605px;text-align:center;color:#0000ff;font-size:14.35px;">3,000,000</div>
<div class="t" style="left:488px;width:101px;top:605px;text-align:right;color:#000000;font-size:14.35px;">1,765</div>
<div class="t" style="left:591px;width:96px;top:605px;text-align:center;color:#0000ff;font-size:14.9px;">Month 1</div>
<div class="t" style="left:687px;width:96px;top:605px;text-align:center;color:#0000ff;font-size:14.9px;">Month 12</div>
<div class="t" style="left:784px;width:98px;top:605px;text-align:center;color:#000000;font-size:14.9px;">12 Month(s)</div>
<div class="t" style="left:882px;width:100px;top:605px;text-align:right;color:#000000;font-size:14.35px;">3,000,000</div>
<div class="t" style="left:999px;top:605px;color:#8a8a8a;font-size:14.5px">[USD]</div>
<div class="t" style="left:1143px;width:101px;top:605px;text-align:right;color:#000000;font-size:14.35px;">44,385</div>
<div class="t" style="left:1246px;width:101px;top:605px;text-align:right;color:#000000;font-size:14.35px;">97,750</div>
<div class="t" style="left:1349px;width:101px;top:605px;text-align:right;color:#000000;font-size:14.35px;">183,825</div>
<div class="t" style="left:1452px;width:101px;top:605px;text-align:right;color:#000000;font-size:14.35px;">295,197</div>
<div class="t" style="left:1555px;width:101px;top:605px;text-align:right;color:#000000;font-size:14.35px;">404,805</div>
<div class="t" style="left:1658px;width:101px;top:605px;text-align:right;color:#000000;font-size:14.35px;">474,037</div>
<div class="t" style="left:1761px;width:101px;top:605px;text-align:right;color:#000000;font-size:14.35px;">474,037</div>
<div class="t" style="left:26px;width:354px;top:626px;text-align:right;color:#0000ff;font-size:14px;">Computer Room Air Conditioning (CRAC) Units</div>
<div class="t" style="left:381px;width:107px;top:626px;text-align:center;color:#0000ff;font-size:14.35px;">3,000,000</div>
<div class="t" style="left:488px;width:101px;top:626px;text-align:right;color:#000000;font-size:14.35px;">1,765</div>
<div class="t" style="left:591px;width:96px;top:626px;text-align:center;color:#0000ff;font-size:14.9px;">Month 1</div>
<div class="t" style="left:687px;width:96px;top:626px;text-align:center;color:#0000ff;font-size:14.9px;">Month 12</div>
<div class="t" style="left:784px;width:98px;top:626px;text-align:center;color:#000000;font-size:14.9px;">12 Month(s)</div>
<div class="t" style="left:882px;width:100px;top:626px;text-align:right;color:#000000;font-size:14.35px;">3,000,000</div>
<div class="t" style="left:999px;top:626px;color:#8a8a8a;font-size:14.5px">[USD]</div>
<div class="t" style="left:1143px;width:101px;top:626px;text-align:right;color:#000000;font-size:14.35px;">44,385</div>
<div class="t" style="left:1246px;width:101px;top:626px;text-align:right;color:#000000;font-size:14.35px;">97,750</div>
<div class="t" style="left:1349px;width:101px;top:626px;text-align:right;color:#000000;font-size:14.35px;">183,825</div>
<div class="t" style="left:1452px;width:101px;top:626px;text-align:right;color:#000000;font-size:14.35px;">295,197</div>
<div class="t" style="left:1555px;width:101px;top:626px;text-align:right;color:#000000;font-size:14.35px;">404,805</div>
<div class="t" style="left:1658px;width:101px;top:626px;text-align:right;color:#000000;font-size:14.35px;">474,037</div>
<div class="t" style="left:1761px;width:101px;top:626px;text-align:right;color:#000000;font-size:14.35px;">474,037</div>
<div class="t" style="left:26px;width:354px;top:647px;text-align:right;color:#0000ff;font-size:14px;">In-row Cooling Systems</div>
<div class="t" style="left:381px;width:107px;top:647px;text-align:center;color:#0000ff;font-size:14.35px;">1,000,000</div>
<div class="t" style="left:488px;width:101px;top:647px;text-align:right;color:#000000;font-size:14.35px;">588</div>
<div class="t" style="left:591px;width:96px;top:647px;text-align:center;color:#0000ff;font-size:14.9px;">Month 1</div>
<div class="t" style="left:687px;width:96px;top:647px;text-align:center;color:#0000ff;font-size:14.9px;">Month 12</div>
<div class="t" style="left:784px;width:98px;top:647px;text-align:center;color:#000000;font-size:14.9px;">12 Month(s)</div>
<div class="t" style="left:882px;width:100px;top:647px;text-align:right;color:#000000;font-size:14.35px;">1,000,000</div>
<div class="t" style="left:999px;top:647px;color:#8a8a8a;font-size:14.5px">[USD]</div>
<div class="t" style="left:1143px;width:101px;top:647px;text-align:right;color:#000000;font-size:14.35px;">14,795</div>
<div class="t" style="left:1246px;width:101px;top:647px;text-align:right;color:#000000;font-size:14.35px;">32,583</div>
<div class="t" style="left:1349px;width:101px;top:647px;text-align:right;color:#000000;font-size:14.35px;">61,275</div>
<div class="t" style="left:1452px;width:101px;top:647px;text-align:right;color:#000000;font-size:14.35px;">98,399</div>
<div class="t" style="left:1555px;width:101px;top:647px;text-align:right;color:#000000;font-size:14.35px;">134,935</div>
<div class="t" style="left:1658px;width:101px;top:647px;text-align:right;color:#000000;font-size:14.35px;">158,012</div>
<div class="t" style="left:1761px;width:101px;top:647px;text-align:right;color:#000000;font-size:14.35px;">158,012</div>
<div class="t" style="left:26px;width:354px;top:668px;text-align:right;color:#0000ff;font-size:14px;">Cooling Distribution Systems</div>
<div class="t" style="left:381px;width:107px;top:668px;text-align:center;color:#0000ff;font-size:14.35px;">1,000,000</div>
<div class="t" style="left:488px;width:101px;top:668px;text-align:right;color:#000000;font-size:14.35px;">588</div>
<div class="t" style="left:591px;width:96px;top:668px;text-align:center;color:#0000ff;font-size:14.9px;">Month 1</div>
<div class="t" style="left:687px;width:96px;top:668px;text-align:center;color:#0000ff;font-size:14.9px;">Month 12</div>
<div class="t" style="left:784px;width:98px;top:668px;text-align:center;color:#000000;font-size:14.9px;">12 Month(s)</div>
<div class="t" style="left:882px;width:100px;top:668px;text-align:right;color:#000000;font-size:14.35px;">1,000,000</div>
<div class="t" style="left:999px;top:668px;color:#8a8a8a;font-size:14.5px">[USD]</div>
<div class="t" style="left:1143px;width:101px;top:668px;text-align:right;color:#000000;font-size:14.35px;">14,795</div>
<div class="t" style="left:1246px;width:101px;top:668px;text-align:right;color:#000000;font-size:14.35px;">32,583</div>
<div class="t" style="left:1349px;width:101px;top:668px;text-align:right;color:#000000;font-size:14.35px;">61,275</div>
<div class="t" style="left:1452px;width:101px;top:668px;text-align:right;color:#000000;font-size:14.35px;">98,399</div>
<div class="t" style="left:1555px;width:101px;top:668px;text-align:right;color:#000000;font-size:14.35px;">134,935</div>
<div class="t" style="left:1658px;width:101px;top:668px;text-align:right;color:#000000;font-size:14.35px;">158,012</div>
<div class="t" style="left:1761px;width:101px;top:668px;text-align:right;color:#000000;font-size:14.35px;">158,012</div>
<div class="t" style="left:26px;width:354px;top:689px;text-align:right;color:#0000ff;font-size:14px;">Other</div>
<div class="a" style="left:584.5px;top:699px;width:4px;height:2px;background:linear-gradient(#00000055 50%,#000000 50%)"></div>
<div class="t" style="left:591px;width:96px;top:689px;text-align:center;color:#0000ff;font-size:14.9px;">Month 1</div>
<div class="t" style="left:687px;width:96px;top:689px;text-align:center;color:#0000ff;font-size:14.9px;">Month 12</div>
<div class="t" style="left:784px;width:98px;top:689px;text-align:center;color:#000000;font-size:14.9px;">12 Month(s)</div>
<div class="a" style="left:977.5px;top:699px;width:4px;height:2px;background:linear-gradient(#00000055 50%,#000000 50%)"></div>
<div class="t" style="left:999px;top:689px;color:#8a8a8a;font-size:14.5px">[USD]</div>
<div class="a" style="left:1239.5px;top:699px;width:4px;height:2px;background:linear-gradient(#00000055 50%,#000000 50%)"></div>
<div class="a" style="left:1342.5px;top:699px;width:4px;height:2px;background:linear-gradient(#00000055 50%,#000000 50%)"></div>
<div class="a" style="left:1445.5px;top:699px;width:4px;height:2px;background:linear-gradient(#00000055 50%,#000000 50%)"></div>
<div class="a" style="left:1548.5px;top:699px;width:4px;height:2px;background:linear-gradient(#00000055 50%,#000000 50%)"></div>
<div class="a" style="left:1651.5px;top:699px;width:4px;height:2px;background:linear-gradient(#00000055 50%,#000000 50%)"></div>
<div class="a" style="left:1754.5px;top:699px;width:4px;height:2px;background:linear-gradient(#00000055 50%,#000000 50%)"></div>
<div class="a" style="left:1857.5px;top:699px;width:4px;height:2px;background:linear-gradient(#00000055 50%,#000000 50%)"></div>
<div class="t" style="left:26px;width:354px;top:710px;text-align:right;color:#0000ff;font-size:14px;">Other</div>
<div class="a" style="left:584.5px;top:720px;width:4px;height:2px;background:linear-gradient(#00000055 50%,#000000 50%)"></div>
<div class="t" style="left:591px;width:96px;top:710px;text-align:center;color:#0000ff;font-size:14.9px;">Month 1</div>
<div class="t" style="left:687px;width:96px;top:710px;text-align:center;color:#0000ff;font-size:14.9px;">Month 12</div>
<div class="t" style="left:784px;width:98px;top:710px;text-align:center;color:#000000;font-size:14.9px;">12 Month(s)</div>
<div class="a" style="left:977.5px;top:720px;width:4px;height:2px;background:linear-gradient(#00000055 50%,#000000 50%)"></div>
<div class="t" style="left:999px;top:710px;color:#8a8a8a;font-size:14.5px">[USD]</div>
<div class="a" style="left:1239.5px;top:720px;width:4px;height:2px;background:linear-gradient(#00000055 50%,#000000 50%)"></div>
<div class="a" style="left:1342.5px;top:720px;width:4px;height:2px;background:linear-gradient(#00000055 50%,#000000 50%)"></div>
<div class="a" style="left:1445.5px;top:720px;width:4px;height:2px;background:linear-gradient(#00000055 50%,#000000 50%)"></div>
<div class="a" style="left:1548.5px;top:720px;width:4px;height:2px;background:linear-gradient(#00000055 50%,#000000 50%)"></div>
<div class="a" style="left:1651.5px;top:720px;width:4px;height:2px;background:linear-gradient(#00000055 50%,#000000 50%)"></div>
<div class="a" style="left:1754.5px;top:720px;width:4px;height:2px;background:linear-gradient(#00000055 50%,#000000 50%)"></div>
<div class="a" style="left:1857.5px;top:720px;width:4px;height:2px;background:linear-gradient(#00000055 50%,#000000 50%)"></div>
<div class="t" style="left:26px;width:354px;top:731px;text-align:right;color:#0000ff;font-size:14px;">Other</div>
<div class="a" style="left:584.5px;top:741px;width:4px;height:2px;background:linear-gradient(#00000055 50%,#000000 50%)"></div>
<div class="t" style="left:591px;width:96px;top:731px;text-align:center;color:#0000ff;font-size:14.9px;">Month 1</div>
<div class="t" style="left:687px;width:96px;top:731px;text-align:center;color:#0000ff;font-size:14.9px;">Month 12</div>
<div class="t" style="left:784px;width:98px;top:731px;text-align:center;color:#000000;font-size:14.9px;">12 Month(s)</div>
<div class="a" style="left:977.5px;top:741px;width:4px;height:2px;background:linear-gradient(#00000055 50%,#000000 50%)"></div>
<div class="t" style="left:999px;top:731px;color:#8a8a8a;font-size:14.5px">[USD]</div>
<div class="a" style="left:1239.5px;top:741px;width:4px;height:2px;background:linear-gradient(#00000055 50%,#000000 50%)"></div>
<div class="a" style="left:1342.5px;top:741px;width:4px;height:2px;background:linear-gradient(#00000055 50%,#000000 50%)"></div>
<div class="a" style="left:1445.5px;top:741px;width:4px;height:2px;background:linear-gradient(#00000055 50%,#000000 50%)"></div>
<div class="a" style="left:1548.5px;top:741px;width:4px;height:2px;background:linear-gradient(#00000055 50%,#000000 50%)"></div>
<div class="a" style="left:1651.5px;top:741px;width:4px;height:2px;background:linear-gradient(#00000055 50%,#000000 50%)"></div>
<div class="a" style="left:1754.5px;top:741px;width:4px;height:2px;background:linear-gradient(#00000055 50%,#000000 50%)"></div>
<div class="a" style="left:1857.5px;top:741px;width:4px;height:2px;background:linear-gradient(#00000055 50%,#000000 50%)"></div>
<div class="t" style="left:26px;width:353px;top:773px;text-align:right;color:#000000;font-weight:bold;font-size:15px;transform:translateY(-1px) scaleX(0.91);transform-origin:100% 0;">IT Equipment</div>
<div class="t" style="left:26px;width:354px;top:794px;text-align:right;color:#0000ff;font-size:14px;">Racks</div>
<div class="t" style="left:381px;width:107px;top:794px;text-align:center;color:#0000ff;font-size:14.35px;">2,500,000</div>
<div class="t" style="left:488px;width:101px;top:794px;text-align:right;color:#000000;font-size:14.35px;">1,471</div>
<div class="t" style="left:591px;width:96px;top:794px;text-align:center;color:#0000ff;font-size:14.9px;">Month 1</div>
<div class="t" style="left:687px;width:96px;top:794px;text-align:center;color:#0000ff;font-size:14.9px;">Month 12</div>
<div class="t" style="left:784px;width:98px;top:794px;text-align:center;color:#000000;font-size:14.9px;">12 Month(s)</div>
<div class="t" style="left:882px;width:100px;top:794px;text-align:right;color:#000000;font-size:14.35px;">2,500,000</div>
<div class="t" style="left:999px;top:794px;color:#8a8a8a;font-size:14.5px">[USD]</div>
<div class="t" style="left:1143px;width:101px;top:794px;text-align:right;color:#000000;font-size:14.35px;">36,988</div>
<div class="t" style="left:1246px;width:101px;top:794px;text-align:right;color:#000000;font-size:14.35px;">81,458</div>
<div class="t" style="left:1349px;width:101px;top:794px;text-align:right;color:#000000;font-size:14.35px;">153,187</div>
<div class="t" style="left:1452px;width:101px;top:794px;text-align:right;color:#000000;font-size:14.35px;">245,997</div>
<div class="t" style="left:1555px;width:101px;top:794px;text-align:right;color:#000000;font-size:14.35px;">337,338</div>
<div class="t" style="left:1658px;width:101px;top:794px;text-align:right;color:#000000;font-size:14.35px;">395,031</div>
<div class="t" style="left:1761px;width:101px;top:794px;text-align:right;color:#000000;font-size:14.35px;">395,031</div>
<div class="t" style="left:26px;width:354px;top:815px;text-align:right;color:#0000ff;font-size:14px;">Servers, Storage, Networking Gear</div>
<div class="t" style="left:381px;width:107px;top:815px;text-align:center;color:#0000ff;font-size:14.35px;">8,000,000</div>
<div class="t" style="left:488px;width:101px;top:815px;text-align:right;color:#000000;font-size:14.35px;">4,706</div>
<div class="t" style="left:591px;width:96px;top:815px;text-align:center;color:#0000ff;font-size:14.9px;">Month 1</div>
<div class="t" style="left:687px;width:96px;top:815px;text-align:center;color:#0000ff;font-size:14.9px;">Month 12</div>
<div class="t" style="left:784px;width:98px;top:815px;text-align:center;color:#000000;font-size:14.9px;">12 Month(s)</div>
<div class="t" style="left:882px;width:100px;top:815px;text-align:right;color:#000000;font-size:14.35px;">8,000,000</div>
<div class="t" style="left:999px;top:815px;color:#8a8a8a;font-size:14.5px">[USD]</div>
<div class="t" style="left:1143px;width:101px;top:815px;text-align:right;color:#000000;font-size:14.35px;">118,361</div>
<div class="t" style="left:1246px;width:101px;top:815px;text-align:right;color:#000000;font-size:14.35px;">260,667</div>
<div class="t" style="left:1349px;width:101px;top:815px;text-align:right;color:#000000;font-size:14.35px;">490,200</div>
<div class="t" style="left:1452px;width:101px;top:815px;text-align:right;color:#000000;font-size:14.35px;">787,192</div>
<div class="t" style="left:1555px;width:101px;top:815px;text-align:right;color:#000000;font-size:14.35px;">1,079,481</div>
<div class="t" style="left:1658px;width:101px;top:815px;text-align:right;color:#000000;font-size:14.35px;">1,264,099</div>
<div class="t" style="left:1761px;width:101px;top:815px;text-align:right;color:#000000;font-size:14.35px;">1,264,099</div>
<div class="t" style="left:26px;width:354px;top:836px;text-align:right;color:#0000ff;font-size:14px;">Other</div>
<div class="a" style="left:432.5px;top:846px;width:4px;height:2px;background:linear-gradient(#0000ff55 50%,#0000ff 50%)"></div>
<div class="a" style="left:584.5px;top:846px;width:4px;height:2px;background:linear-gradient(#00000055 50%,#000000 50%)"></div>
<div class="t" style="left:591px;width:96px;top:836px;text-align:center;color:#0000ff;font-size:14.9px;">Month 1</div>
<div class="t" style="left:687px;width:96px;top:836px;text-align:center;color:#0000ff;font-size:14.9px;">Month 12</div>
<div class="t" style="left:784px;width:98px;top:836px;text-align:center;color:#000000;font-size:14.9px;">12 Month(s)</div>
<div class="a" style="left:977.5px;top:846px;width:4px;height:2px;background:linear-gradient(#00000055 50%,#000000 50%)"></div>
<div class="t" style="left:999px;top:836px;color:#8a8a8a;font-size:14.5px">[USD]</div>
<div class="a" style="left:1239.5px;top:846px;width:4px;height:2px;background:linear-gradient(#00000055 50%,#000000 50%)"></div>
<div class="a" style="left:1342.5px;top:846px;width:4px;height:2px;background:linear-gradient(#00000055 50%,#000000 50%)"></div>
<div class="a" style="left:1445.5px;top:846px;width:4px;height:2px;background:linear-gradient(#00000055 50%,#000000 50%)"></div>
<div class="a" style="left:1548.5px;top:846px;width:4px;height:2px;background:linear-gradient(#00000055 50%,#000000 50%)"></div>
<div class="a" style="left:1651.5px;top:846px;width:4px;height:2px;background:linear-gradient(#00000055 50%,#000000 50%)"></div>
<div class="a" style="left:1754.5px;top:846px;width:4px;height:2px;background:linear-gradient(#00000055 50%,#000000 50%)"></div>
<div class="a" style="left:1857.5px;top:846px;width:4px;height:2px;background:linear-gradient(#00000055 50%,#000000 50%)"></div>
<div class="t" style="left:26px;width:354px;top:857px;text-align:right;color:#0000ff;font-size:14px;">Other</div>
<div class="a" style="left:432.5px;top:867px;width:4px;height:2px;background:linear-gradient(#0000ff55 50%,#0000ff 50%)"></div>
<div class="a" style="left:584.5px;top:867px;width:4px;height:2px;background:linear-gradient(#00000055 50%,#000000 50%)"></div>
<div class="t" style="left:591px;width:96px;top:857px;text-align:center;color:#0000ff;font-size:14.9px;">Month 1</div>
<div class="t" style="left:687px;width:96px;top:857px;text-align:center;color:#0000ff;font-size:14.9px;">Month 12</div>
<div class="t" style="left:784px;width:98px;top:857px;text-align:center;color:#000000;font-size:14.9px;">12 Month(s)</div>
<div class="a" style="left:977.5px;top:867px;width:4px;height:2px;background:linear-gradient(#00000055 50%,#000000 50%)"></div>
<div class="t" style="left:999px;top:857px;color:#8a8a8a;font-size:14.5px">[USD]</div>
<div class="a" style="left:1239.5px;top:867px;width:4px;height:2px;background:linear-gradient(#00000055 50%,#000000 50%)"></div>
<div class="a" style="left:1342.5px;top:867px;width:4px;height:2px;background:linear-gradient(#00000055 50%,#000000 50%)"></div>
<div class="a" style="left:1445.5px;top:867px;width:4px;height:2px;background:linear-gradient(#00000055 50%,#000000 50%)"></div>
<div class="a" style="left:1548.5px;top:867px;width:4px;height:2px;background:linear-gradient(#00000055 50%,#000000 50%)"></div>
<div class="a" style="left:1651.5px;top:867px;width:4px;height:2px;background:linear-gradient(#00000055 50%,#000000 50%)"></div>
<div class="a" style="left:1754.5px;top:867px;width:4px;height:2px;background:linear-gradient(#00000055 50%,#000000 50%)"></div>
<div class="a" style="left:1857.5px;top:867px;width:4px;height:2px;background:linear-gradient(#00000055 50%,#000000 50%)"></div>
<div class="t" style="left:26px;width:354px;top:878px;text-align:right;color:#0000ff;font-size:14px;">Other</div>
<div class="a" style="left:432.5px;top:888px;width:4px;height:2px;background:linear-gradient(#0000ff55 50%,#0000ff 50%)"></div>
<div class="a" style="left:584.5px;top:888px;width:4px;height:2px;background:linear-gradient(#00000055 50%,#000000 50%)"></div>
<div class="t" style="left:591px;width:96px;top:878px;text-align:center;color:#0000ff;font-size:14.9px;">Month 1</div>
<div class="t" style="left:687px;width:96px;top:878px;text-align:center;color:#0000ff;font-size:14.9px;">Month 12</div>
<div class="t" style="left:784px;width:98px;top:878px;text-align:center;color:#000000;font-size:14.9px;">12 Month(s)</div>
<div class="a" style="left:977.5px;top:888px;width:4px;height:2px;background:linear-gradient(#00000055 50%,#000000 50%)"></div>
<div class="t" style="left:999px;top:878px;color:#8a8a8a;font-size:14.5px">[USD]</div>
<div class="a" style="left:1239.5px;top:888px;width:4px;height:2px;background:linear-gradient(#00000055 50%,#000000 50%)"></div>
<div class="a" style="left:1342.5px;top:888px;width:4px;height:2px;background:linear-gradient(#00000055 50%,#000000 50%)"></div>
<div class="a" style="left:1445.5px;top:888px;width:4px;height:2px;background:linear-gradient(#00000055 50%,#000000 50%)"></div>
<div class="a" style="left:1548.5px;top:888px;width:4px;height:2px;background:linear-gradient(#00000055 50%,#000000 50%)"></div>
<div class="a" style="left:1651.5px;top:888px;width:4px;height:2px;background:linear-gradient(#00000055 50%,#000000 50%)"></div>
<div class="a" style="left:1754.5px;top:888px;width:4px;height:2px;background:linear-gradient(#00000055 50%,#000000 50%)"></div>
<div class="a" style="left:1857.5px;top:888px;width:4px;height:2px;background:linear-gradient(#00000055 50%,#000000 50%)"></div>
<div class="a" style="left:26px;top:897px;width:1868px;height:1px;background:#000"></div>
<div class="t" style="left:26px;width:353px;top:899px;text-align:right;color:#000000;font-weight:bold;font-size:15px;transform:translateY(-1px) scaleX(0.91);transform-origin:100% 0;">Subtotal</div>
<div class="t" style="left:381px;width:107px;top:899px;text-align:center;color:#0000ff;font-size:14.35px;">54,350,000</div>
<div class="t" style="left:488px;width:104px;top:899px;text-align:center;color:#0000ff;font-size:14.35px;">25,794</div>
<div class="t" style="left:591px;width:96px;top:899px;text-align:center;color:#000000;font-size:14.9px;">Month 1</div>
<div class="t" style="left:687px;width:96px;top:899px;text-align:center;color:#000000;font-size:14.9px;">Month 18</div>
<div class="t" style="left:784px;width:98px;top:899px;text-align:center;color:#000000;font-size:14.9px;">18 Month(s)</div>
<div class="t" style="left:882px;width:100px;top:899px;text-align:right;color:#000000;font-weight:bold;font-size:14.6px;">54,350,000</div>
<div class="t" style="left:999px;top:899px;color:#8a8a8a;font-size:14.5px">[USD]</div>
<div class="t" style="left:1143px;width:101px;top:899px;text-align:right;color:#000000;font-weight:bold;font-size:14.6px;">2,906,867</div>
<div class="t" style="left:1246px;width:101px;top:899px;text-align:right;color:#000000;font-weight:bold;font-size:14.6px;">896,043</div>
<div class="t" style="left:1349px;width:101px;top:899px;text-align:right;color:#000000;font-weight:bold;font-size:14.6px;">1,714,994</div>
<div class="t" style="left:1452px;width:101px;top:899px;text-align:right;color:#000000;font-weight:bold;font-size:14.6px;">2,796,375</div>
<div class="t" style="left:1555px;width:101px;top:899px;text-align:right;color:#000000;font-weight:bold;font-size:14.6px;">3,943,878</div>
<div class="t" style="left:1658px;width:101px;top:899px;text-align:right;color:#000000;font-weight:bold;font-size:14.6px;">4,858,832</div>
<div class="t" style="left:1761px;width:101px;top:899px;text-align:right;color:#000000;font-weight:bold;font-size:14.6px;">5,349,093</div>
<svg class="a" style="left:592px;top:898px" width="7" height="7"><path d="M0 0 L6 0 L0 6Z" fill="#1a8a1a"/></svg>
<svg class="a" style="left:688px;top:898px" width="7" height="7"><path d="M0 0 L6 0 L0 6Z" fill="#1a8a1a"/></svg>
<div class="a" style="left:380px;top:287px;width:109px;height:24px;border:2px solid #217346"></div>
<div class="a" style="left:484px;top:306px;width:7px;height:7px;background:#217346;border:1px solid #fff"></div>
<div class="a" style="left:985px;top:77px;width:1px;height:831px;background:#9b9b9b"></div>
<div class="a" style="left:26px;top:183px;width:1868px;height:1px;background:#9b9b9b"></div>
<div class="a" style="left:1894px;top:57px;width:26px;height:851px;background:#e6e6e6"></div>
<div class="a" style="left:1898px;top:77px;width:19px;height:812px;background:#f0f0f5"></div>
<div class="a" style="left:1894px;top:77px;width:1px;height:831px;background:#9c9c9c"></div>
<div class="a" style="left:1898px;top:59px;width:19px;height:19px;background:#fff;border:1px solid #a0a0a0"></div>
<svg class="a" style="left:1902px;top:64px" width="12" height="8"><path d="M1.5 6.5 L6 1.5 L10.5 6.5Z" fill="#222"/></svg>
<div class="a" style="left:1898px;top:217px;width:19px;height:326px;background:#fff;border:1px solid #9c9c9c"></div>
<div class="a" style="left:1898px;top:889px;width:19px;height:19px;background:#fff;border:1px solid #a0a0a0"></div>
<svg class="a" style="left:1902px;top:894px" width="12" height="8"><path d="M1.5 1.5 L6 6.5 L10.5 1.5Z" fill="#222"/></svg>
<div class="a" style="left:0;top:908px;width:1920px;height:29px;background:#e6e6e6"></div>
<div class="a" style="left:0;top:908px;width:1895px;height:1px;background:#b4b4b4"></div>
<svg class="a" style="left:26px;top:915px" width="10" height="14"><path d="M8 1 L2 7 L8 13Z" fill="#c0c0c0"/></svg>
<svg class="a" style="left:55px;top:915px" width="10" height="14"><path d="M2 1 L8 7 L2 13Z" fill="#217346"/></svg>
<div class="sep" style="left:102px"></div>
<div class="tab" style="left:106px;width:90px;background:#002060;color:#fff">Contents</div>
<div class="sep" style="left:197px"></div>
<div class="tab" style="left:201px;width:62px;background:#00b0f0;color:#000">Input</div>
<div class="sep" style="left:264px"></div>
<div class="tab" style="left:471px;width:181px;background:#002060;color:#fff">Revenue &amp; Expenses</div>
<div class="sep" style="left:653px"></div>
<div class="tab" style="left:657px;width:96px;background:#002060;color:#fff">Financing</div>
<div class="sep" style="left:754px"></div>
<div class="tab" style="left:758px;width:162px;background:#002060;color:#fff">Annual Financing</div>
<div class="sep" style="left:921px"></div>
<div class="tab" style="left:925px;width:94px;background:#002060;color:#fff">Waterfall</div>
<div class="sep" style="left:1020px"></div>
<div class="tab" style="left:1024px;width:157px;background:#002060;color:#fff">Annual WaterFall</div>
<div class="sep" style="left:1182px"></div>
<div class="tab" style="left:1186px;width:97px;background:#002060;color:#fff">Month CF</div>
<div class="sep" style="left:1284px"></div>
<div class="tab" style="left:1288px;width:100px;background:#002060;color:#fff">Annual CF</div>
<div class="sep" style="left:1389px"></div>
<div class="tab" style="left:1393px;width:60px;text-align:left;padding-left:11px;overflow:hidden">Summ</div>
<div class="a" style="left:265px;top:908px;width:204px;height:27px;background:linear-gradient(#ffffff,#a9dcf3);border-left:1px solid #b5b5b5;border-right:1px solid #b5b5b5;border-bottom:2px solid #217346"></div>
<div class="a" style="left:265px;top:908px;width:204px;height:25px;line-height:15px;padding-top:3px;text-align:center;font-size:16.3px;font-weight:bold;color:#217346;white-space:nowrap">Construction Schedule</div>
<div class="a" style="left:1461px;top:922px;width:2px;height:2px;background:#217346"></div>
<div class="a" style="left:1466px;top:922px;width:2px;height:2px;background:#217346"></div>
<div class="a" style="left:1471px;top:922px;width:2px;height:2px;background:#217346"></div>
<svg class="a" style="left:1485px;top:912px" width="22" height="22"><circle cx="11" cy="11" r="9.5" stroke="#7a7a7a" stroke-width="1.3" fill="none"/><path d="M11 5.5 V16.5 M5.5 11 H16.5" stroke="#7a7a7a" stroke-width="1.5"/></svg>
<div class="a" style="left:1524px;top:917px;width:3px;height:3px;background:#b0b0b0"></div>
<div class="a" style="left:1524px;top:922px;width:3px;height:3px;background:#b0b0b0"></div>
<div class="a" style="left:1524px;top:927px;width:3px;height:3px;background:#b0b0b0"></div>
<div class="a" style="left:1542px;top:913px;width:350px;height:19px;background:#f0f0f5"></div>
<div class="a" style="left:1542px;top:913px;width:19px;height:19px;background:#fff;border:1px solid #a0a0a0"></div>
<svg class="a" style="left:1546px;top:917px" width="10" height="12"><path d="M7 1 L2 6 L7 11Z" fill="#222"/></svg>
<div class="a" style="left:1560px;top:913px;width:26px;height:19px;background:#fff;border:1px solid #a0a0a0"></div>
<div class="a" style="left:1874px;top:913px;width:19px;height:19px;background:#fff;border:1px solid #a0a0a0"></div>
<svg class="a" style="left:1879px;top:917px" width="10" height="12"><path d="M3 1 L8 6 L3 11Z" fill="#222"/></svg>
<div class="a" style="left:0;top:937px;width:1920px;height:29px;background:#f0f0f5;border-top:1px solid #c6c6c6;border-bottom:2px solid #fff"></div>
<div class="a" style="left:14px;top:944px;font-size:13px;color:#333;transform:scaleX(0.965);transform-origin:0 0">Ready</div>
<div class="a" style="left:71px;top:944px;font-size:13px;color:#333;transform:scaleX(0.965);transform-origin:0 0;white-space:nowrap">Circular References</div>
<svg class="a" style="left:230px;top:942px" width="20" height="18"><rect x="3.8" y="2.7" width="12.4" height="12.3" fill="#fff" stroke="#5f5f5f" stroke-width="1.4"/><rect x="10" y="2" width="7" height="3.5" fill="#5f5f5f"/><circle cx="5.5" cy="4.2" r="3.4" fill="#5f5f5f" stroke="#f0f0f5" stroke-width="0.6"/><path d="M6.2 7.4H7.7M9.3 7.4H10.8M12.4 7.4H13.9M6.2 10.5H7.7M9.3 10.5H10.8M12.4 10.5H13.9M6.2 13.4H7.7M9.3 13.4H10.8M12.4 13.4H13.9" stroke="#5f5f5f" stroke-width="1.1"/></svg>
<svg class="a" style="left:268px;top:940px" width="24" height="24"><path d="M8.7 4.3 A7 7 0 0 0 9.7 18.5" stroke="#5f5f5f" fill="none" stroke-width="1.3" stroke-dasharray="2.6 1.4"/><path d="M10.5 3V11.5 M8.2 9.2 L10.5 11.8 L12.8 9.2 M12.5 9.4H18.5 M16.4 7.3 L18.7 9.4 L16.4 11.5" stroke="#5f5f5f" fill="none" stroke-width="1.2"/><path d="M12.8 20.2 L21.2 13" stroke="#5f5f5f" stroke-width="2.2"/><path d="M12.4 12.7 L21.6 20.6" stroke="#5f5f5f" stroke-width="1.4"/></svg>
<div class="a" style="left:293px;top:944px;font-size:13px;font-weight:bold;color:#333;transform:scaleX(0.975);transform-origin:0 0;white-space:nowrap">Accessibility: Investigate</div>
<svg class="a" style="left:1408px;top:940px" width="26" height="24"><rect x="3" y="2.3" width="18.7" height="12.5" rx="1.5" fill="#555"/><rect x="5" y="19" width="5" height="1.5" fill="#555"/><circle cx="15.4" cy="15.5" r="6.2" fill="#f0f0f5"/><circle cx="15.4" cy="15.5" r="3.6" fill="none" stroke="#555" stroke-width="2.4" stroke-dasharray="1.6 1.2"/><circle cx="15.4" cy="15.5" r="2.6" fill="#555"/><circle cx="15.4" cy="15.5" r="1" fill="#f0f0f5"/></svg>
<div class="a" style="left:1432px;top:944px;font-size:13px;color:#333;transform:scaleX(0.965);transform-origin:0 0;white-space:nowrap">Display Settings</div>
<div class="a" style="left:1548px;top:938px;width:50px;height:26px;background:#c4c4c4"></div>
<svg class="a" style="left:1565px;top:943px" width="17" height="17"><path d="M0.7 0.6H15.3V15.3H0.7Z M0.7 5.5H15.3 M0.7 10.5H15.3 M5.5 0.6V15.3 M10.5 0.6V15.3" stroke="#6e6e6e" stroke-width="1.1" fill="none"/></svg>
<svg class="a" style="left:1614px;top:943px" width="18" height="16"><path d="M0.7 0.7H16.3V14.3H0.7Z M4.7 2.9H12.1V12H4.7Z" stroke="#6e6e6e" stroke-width="1" fill="none"/><path d="M6.5 5.4H10.8M6.5 7.4H10.8M6.5 9.4H10.8" stroke="#6e6e6e" stroke-width="0.9"/></svg>
<svg class="a" style="left:1664px;top:943px" width="18" height="17"><path d="M0.7 0.7H16.3V15H0.7Z M5.5 0.7V9.2 M10.5 0.7V9.2 H0.7" stroke="#6e6e6e" stroke-width="1" fill="none"/></svg>
<div class="a" style="left:1705px;top:950.5px;width:10px;height:1.5px;background:#444"></div>
<div class="a" style="left:1721px;top:950.5px;width:125px;height:1.5px;background:#444"></div>
<div class="a" style="left:1768px;top:944px;width:6px;height:14px;background:#444"></div>
<div class="a" style="left:1783px;top:948px;width:1px;height:7px;background:#444"></div>
<svg class="a" style="left:1852px;top:946px" width="10" height="10"><path d="M5 0V9.5M0 4.75H9.5" stroke="#444" stroke-width="1.1"/></svg>
<div class="a" style="left:1877px;top:944px;font-size:13px;color:#333">80%</div>
</body></html>
